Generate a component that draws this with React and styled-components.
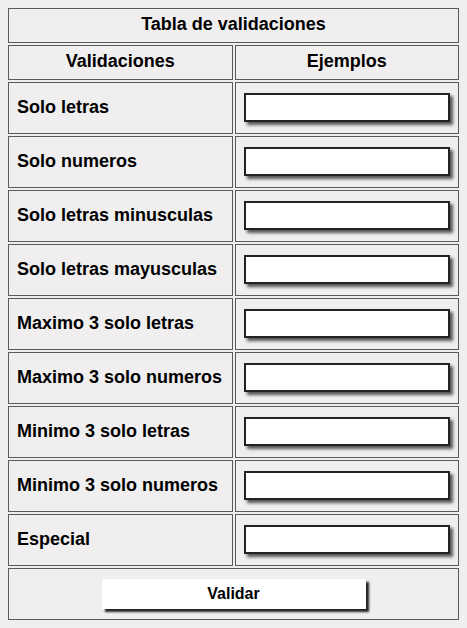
import React from 'react';
import styled, { createGlobalStyle } from 'styled-components';

const GlobalStyle = createGlobalStyle`
  body {
    margin: 8px;
    background: #f0eeee;
    font-family: "Liberation Sans", Arial, sans-serif;
    color: #000000;
  }
`;

const Table = styled.form`
  display: grid;
  grid-template-columns: 1fr 1fr;
  grid-template-rows: 35px 35px;
  grid-auto-rows: 52px;
  gap: 2px;
`;

const Cell = styled.div`
  box-sizing: border-box;
  display: flex;
  align-items: center;
  justify-content: ${(p) => (p.center ? 'center' : 'flex-start')};
  grid-column: ${(p) => (p.wide ? '1 / span 2' : 'auto')};
  padding: 0 8px 2px;

  font-weight: bold;
  font-size: 18px;

  background: #f0eeee;
  border: 1px solid #5a5a5a;
`;

const Input = styled.input`
  box-sizing: border-box;
  width: 100%;
  height: 29px;
  margin-top: 1px;
  padding: 2px 4px;

  font-size: 16px;
  font-family: "Liberation Sans", Arial, sans-serif;

  background: #ffffff;
  border: 2px solid #222222;
  box-shadow: 3px 3px 3px #555555;
  outline: none;
`;

const Button = styled.button`
  width: 264px;
  height: 30px;
  margin-top: 2px;

  font-weight: bold;
  font-size: 16px;
  font-family: "Liberation Sans", Arial, sans-serif;
  color: #000000;

  background: #ffffff;
  border: none;
  box-shadow: 3px 3px 2px #222222;
  cursor: pointer;
`;

const rules = [
  'Solo letras',
  'Solo numeros',
  'Solo letras minusculas',
  'Solo letras mayusculas',
  'Maximo 3 solo letras',
  'Maximo 3 solo numeros',
  'Minimo 3 solo letras',
  'Minimo 3 solo numeros',
  'Especial',
];

export default function App() {
  return (
    <>
      <GlobalStyle />
      <Table onSubmit={(e) => e.preventDefault()}>
        <Cell wide center>
          Tabla de validaciones
        </Cell>
        <Cell center>Validaciones</Cell>
        <Cell center>Ejemplos</Cell>
        {rules.map((rule) => (
          <React.Fragment key={rule}>
            <Cell>{rule}</Cell>
            <Cell>
              <Input type="text" />
            </Cell>
          </React.Fragment>
        ))}
        <Cell wide center>
          <Button type="submit">Validar</Button>
        </Cell>
      </Table>
    </>
  );
}
